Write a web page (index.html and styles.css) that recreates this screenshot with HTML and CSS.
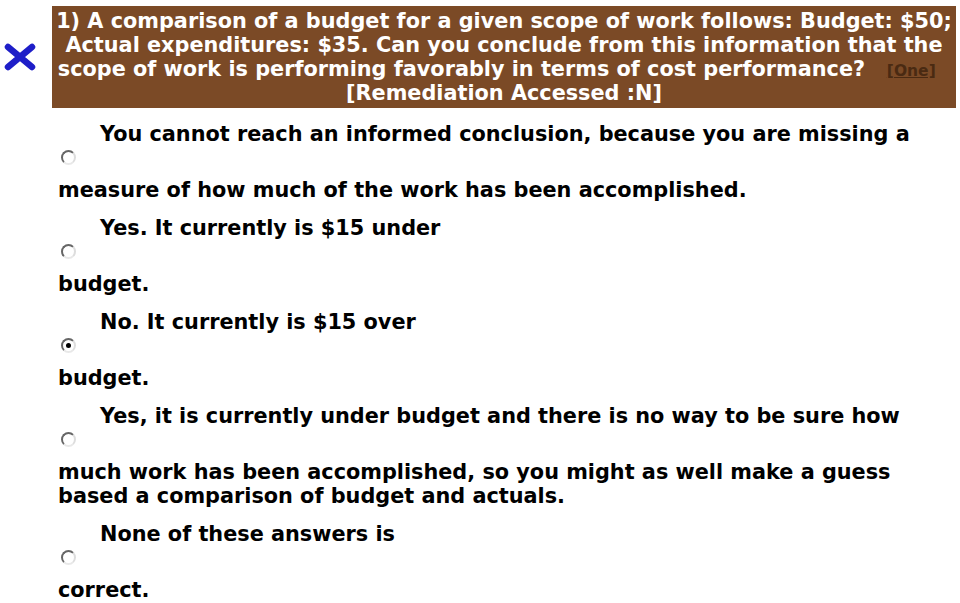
FILE: index.html
```html
<!DOCTYPE html>
<html>
<head>
<meta charset="utf-8">
<link rel="stylesheet" href="styles.css">
</head>
<body>
<div class="question">
  <div class="mark">
    <svg width="32" height="28" viewBox="0 0 32 28"><path d="M4 4 L28 24 M28 4 L4 24" stroke="#1e1ec8" stroke-width="6.5" stroke-linecap="round"/></svg>
  </div>
  <div class="qbox">1) A comparison of a budget for a given scope of work follows: Budget: $50; Actual expenditures: $35. Can you conclude from this information that the scope of work is performing favorably in terms of cost performance? &nbsp; <a class="one" href="#">[One]</a>&nbsp;&nbsp;<br>[Remediation Accessed :N]</div>
</div>
<div class="answers">
  <div class="answer">
    <div class="first">You cannot reach an informed conclusion, because you are missing a</div>
    <div class="radio-row"><span class="radio"></span></div>
    <div class="rest">measure of how much of the work has been accomplished.</div>
  </div>
  <div class="answer">
    <div class="first">Yes. It currently is $15 under</div>
    <div class="radio-row"><span class="radio"></span></div>
    <div class="rest">budget.</div>
  </div>
  <div class="answer">
    <div class="first">No. It currently is $15 over</div>
    <div class="radio-row"><span class="radio checked"></span></div>
    <div class="rest">budget.</div>
  </div>
  <div class="answer">
    <div class="first">Yes, it is currently under budget and there is no way to be sure how</div>
    <div class="radio-row"><span class="radio"></span></div>
    <div class="rest">much work has been accomplished, so you might as well make a guess<br>based a comparison of budget and actuals.</div>
  </div>
  <div class="answer">
    <div class="first">None of these answers is</div>
    <div class="radio-row"><span class="radio"></span></div>
    <div class="rest">correct.</div>
  </div>
</div>
</body>
</html>
```
FILE: styles.css
```css
html, body {
  margin: 0;
  padding: 0;
  background: #ffffff;
}
body {
  font-family: "DejaVu Sans", sans-serif;
  font-weight: bold;
  font-size: 20.8px;
  color: #000;
}
.question {
  display: flex;
  margin-top: 6px;
  margin-right: 4px;
}
.mark {
  width: 52px;
  flex: none;
  display: flex;
  align-items: center;
  justify-content: flex-start;
  padding-left: 4px;
  box-sizing: border-box;
}
.qbox {
  flex: 1;
  background: #7b4a26;
  color: #ffffff;
  text-align: center;
  line-height: 24px;
  padding: 3px 2px 3px;
}
.one {
  color: #4a2a12;
  font-size: 15.5px;
  line-height: 1;
  text-decoration: underline;
}
.answers {
  padding-left: 58px;
  margin-top: 14px;
}
.answer {
  margin-bottom: 14px;
  line-height: 24px;
}
.first {
  padding-left: 42px;
}
.radio-row {
  height: 32px;
  display: flex;
  align-items: flex-start;
  padding-top: 4px;
  box-sizing: border-box;
}
.radio {
  display: block;
  width: 15px;
  height: 15px;
  margin-left: 3px;
  border-radius: 50%;
  box-sizing: border-box;
  border: 2px solid;
  border-color: #666 #ddd #e8e8e8 #666;
  background: #fff;
  position: relative;
}
.radio.checked::after {
  content: "";
  position: absolute;
  left: 3px;
  top: 3px;
  width: 5px;
  height: 5px;
  border-radius: 50%;
  background: #000;
}
```
